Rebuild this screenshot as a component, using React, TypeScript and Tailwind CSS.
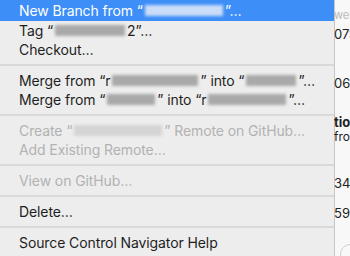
import React from "react";

type Item = {
  parts: (string | number)[];
  disabled?: boolean;
  active?: boolean;
};

// numbers in parts are blurred (redacted) spans of that width
const groups: Item[][] = [
  [
    { parts: ["New Branch from \u201c", 78, "\u201d\u2026"], active: true },
    { parts: ["Tag \u201c", 70, "2\u201d\u2026"] },
    { parts: ["Checkout\u2026"] },
  ],
  [
    { parts: ["Merge from \u201cr", 86, "\u201d into \u201c", 50, "\u201d\u2026"] },
    { parts: ["Merge from \u201c", 48, "\u201d into \u201cr", 78, "\u201d\u2026"] },
  ],
  [
    { parts: ["Create \u201c", 88, "\u201d Remote on GitHub\u2026"], disabled: true },
    { parts: ["Add Existing Remote\u2026"], disabled: true },
  ],
  [{ parts: ["View on GitHub\u2026"], disabled: true }],
  [{ parts: ["Delete\u2026"] }],
  [{ parts: ["Source Control Navigator Help"] }],
];

function Redacted({ w, active, disabled }: { w: number; active?: boolean; disabled?: boolean }) {
  const tone = active ? "bg-[#c9dcf8]" : disabled ? "bg-[#d4d4d4]" : "bg-[#a9a9a9]";
  return (
    <span
      className={`inline-block h-[11px] mx-[2px] align-middle blur-[1.5px] ${tone}`}
      style={{ width: w }}
    />
  );
}

function Row({ item, first }: { item: Item; first?: boolean }) {
  const color = item.active
    ? "bg-[#3d8ef6] text-white"
    : item.disabled
    ? "text-[#b2b2b2]"
    : "text-[#1e1e1e]";
  return (
    <div className={`flex items-center pl-[19px] whitespace-nowrap ${first ? "h-[21px]" : "h-[19px]"} ${color}`}>
      {item.parts.map((p, i) =>
        typeof p === "number" ? (
          <Redacted key={i} w={p} active={item.active} disabled={item.disabled} />
        ) : (
          <span key={i}>{p}</span>
        )
      )}
    </div>
  );
}

export default function App() {
  return (
    <div className="w-[350px] h-[256px] flex overflow-hidden bg-[#f8f8f8] font-['Inter',sans-serif]">
      <div className="w-[335px] shrink-0 bg-[#ededed] border-r border-[#c6c6c6] text-[14px] tracking-[-0.1px]">
        {groups.map((g, gi) => (
          <div key={gi}>
            {gi > 0 && (
              <div className="h-[12px] flex items-center">
                <div className="w-full h-[2px] bg-[#d9d9d9]" />
              </div>
            )}
            {g.map((item, ii) => (
              <Row key={ii} item={item} first={gi === 0 && ii === 0} />
            ))}
          </div>
        ))}
      </div>
      <div className="flex-1 overflow-hidden text-[13px] text-[#222] leading-none -ml-[1px]">
        <div className="mt-[10px] text-[11px] text-[#b8b8b8]">welc</div>
        <div className="mt-[7px]">07:</div>
        <div className="mt-[36px]">06:</div>
        <div className="mt-[26px] font-bold">tion</div>
        <div className="mt-[2px] text-[12px]">fro</div>
        <div className="mt-[34px]">34:</div>
        <div className="mt-[17px]">59:</div>
        <div className="mt-[24px] ml-[6px] w-[20px] h-[20px] rounded-full border border-[#cfcfcf]" />
      </div>
    </div>
  );
}
